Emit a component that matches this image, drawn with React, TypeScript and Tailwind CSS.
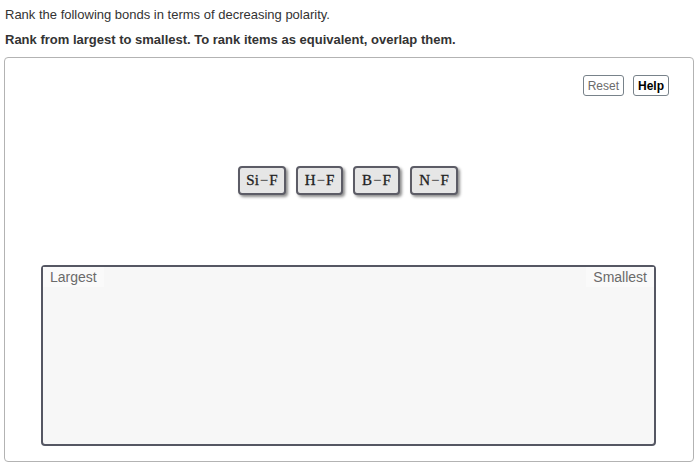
import React from 'react';

const bonds = [
  { a: 'Si', w: 'w-[48px]' },
  { a: 'H', w: 'w-[47px]' },
  { a: 'B', w: 'w-[47px]' },
  { a: 'N', w: 'w-[48px]' },
];

export default function App() {
  return (
    <div className="min-h-screen bg-white font-['Liberation_Sans',Arial,sans-serif] text-[#333]">
      <div className="px-[5px] pt-[6px]">
        <p className="text-[13px] leading-[18px]">Rank the following bonds in terms of decreasing polarity.</p>
        <p className="mt-[7px] text-[13px] leading-[18px] font-bold">
          Rank from largest to smallest. To rank items as equivalent, overlap them.
        </p>
      </div>

      <div className="mx-[4px] mt-[8px] h-[405px] w-[690px] rounded-[4px] border border-[#b3b3b3] bg-white">
        <div className="flex justify-end gap-[9px] pr-[24px] pt-[17px]">
          <button className="h-[21px] rounded-[3px] border border-[#78828a] px-[4px] text-[12px] leading-[18px] text-[#6b6b6b]">
            Reset
          </button>
          <button className="h-[21px] rounded-[3px] border border-[#78828a] px-[4px] text-[12px] font-bold leading-[18px] text-black">
            Help
          </button>
        </div>

        <div className="mt-[70px] flex gap-[10px] pl-[233px]">
          {bonds.map((b) => (
            <div
              key={b.a}
              className={`${b.w} flex h-[29px] items-center justify-center rounded-[4px] border-2 border-[#5c5c66] bg-[#e6e6e6] font-['Liberation_Serif','DejaVu_Serif',serif] text-[15px] text-[#222] shadow-[2px_2px_3px_rgba(0,0,0,0.45)] [-webkit-text-stroke:0.3px_#222]`}
            >
              <span>{b.a}</span>
              <span className="mx-[1px] [-webkit-text-stroke:0]">−</span>
              <span>F</span>
            </div>
          ))}
        </div>

        <div className="mt-[70px] ml-[36px] h-[181px] w-[615px] rounded-[4px] border-2 border-[#555763] bg-[#f7f7f7]">
          <div className="flex justify-between">
            <span className="bg-[#fafafa] px-[7px] text-[14px] leading-[20px] text-[#6a6a6a]">Largest</span>
            <span className="bg-[#fafafa] px-[7px] text-[14px] leading-[20px] text-[#6a6a6a]">Smallest</span>
          </div>
        </div>
      </div>
    </div>
  );
}
